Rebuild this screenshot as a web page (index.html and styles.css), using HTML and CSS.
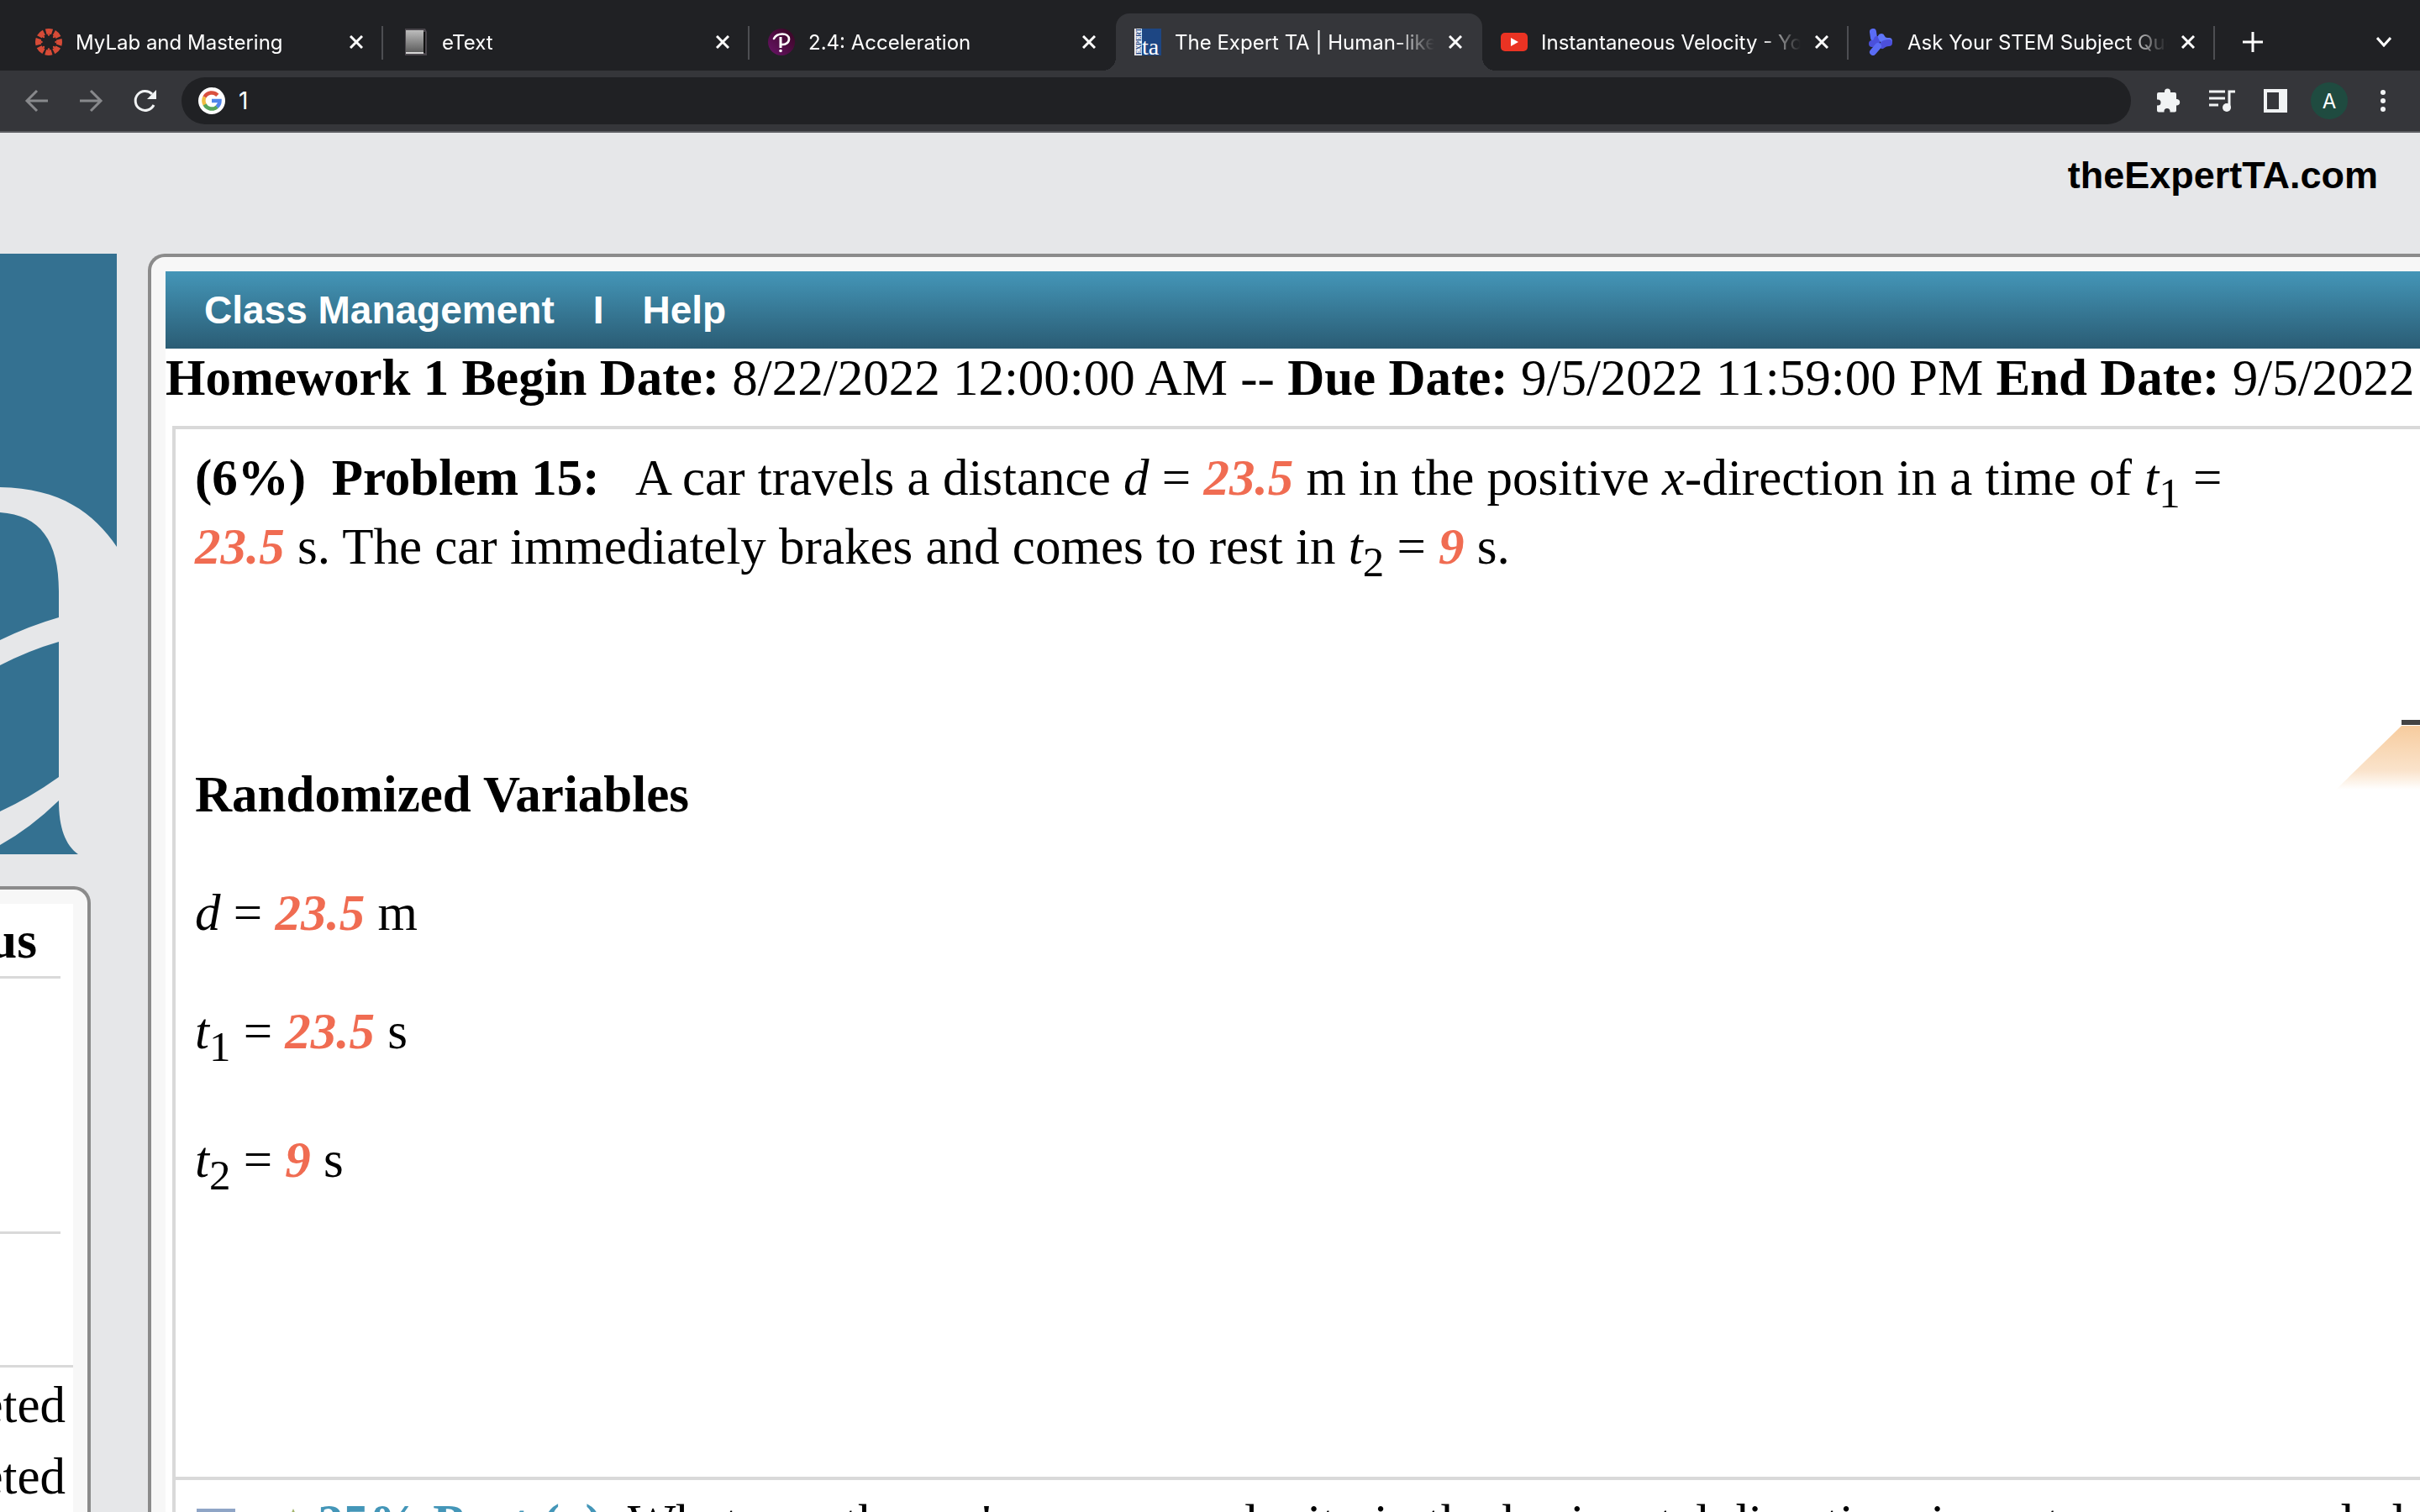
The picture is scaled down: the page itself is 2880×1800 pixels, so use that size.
FILE: index.html
```html
<!DOCTYPE html>
<html lang="en">
<head>
	<meta charset="UTF-8">
	<title>The Expert TA | Human-like Grading</title>
<link rel="stylesheet" href="styles.css">
</head>
<body>
<div class="tabs">
	<div class="tab">
		<svg class="icon" viewBox="0 0 32 32">
			<circle cx="16" cy="16" r="12.5" fill="none" stroke="#d64b37" stroke-width="7" stroke-dasharray="7.4 2.417" stroke-dashoffset="3.7"/>
			<circle cx="16" cy="16" r="8.6" fill="none" stroke="#202124" stroke-width="1.6"/>
			<g fill="#d64b37">
				<circle cx="16" cy="7.5" r="1.2"/><circle cx="22" cy="10" r="1.2"/><circle cx="24.5" cy="16" r="1.2"/><circle cx="22" cy="22" r="1.2"/>
				<circle cx="16" cy="24.5" r="1.2"/><circle cx="10" cy="22" r="1.2"/><circle cx="7.5" cy="16" r="1.2"/><circle cx="10" cy="10" r="1.2"/>
			</g>
		</svg>
		<span class="title">MyLab and Mastering</span>
		<button class="close" aria-label="Close tab"><svg viewBox="0 0 16 16"><path d="M1 1L15 15M15 1L1 15"/></svg></button>
	</div>
	<div class="tab">
		<svg class="icon" viewBox="0 0 32 32">
			<defs><linearGradient id="book" x1="0" y1="0" x2="0" y2="1"><stop offset="0" stop-color="#bdbdbd"/><stop offset="1" stop-color="#5e5e5e"/></linearGradient></defs>
			<path fill="#4a464c" d="M4 0H28L30 4V32H4z"/>
			<path fill="url(#book)" d="M5 2H26V28H5z"/>
			<path fill="#d6d6d6" d="M5 28H26V30H5z"/>
			<path fill="#111" d="M26 4H28V29H26z"/>
		</svg>
		<span class="title">eText</span>
		<button class="close" aria-label="Close tab"><svg viewBox="0 0 16 16"><path d="M1 1L15 15M15 1L1 15"/></svg></button>
	</div>
	<div class="tab">
		<svg class="icon" viewBox="0 0 32 32">
			<defs><linearGradient id="plum" x1="0" y1="1" x2="1" y2="0"><stop offset="0" stop-color="#6a1468"/><stop offset="1" stop-color="#35051f"/></linearGradient></defs>
			<circle cx="16" cy="16" r="16" fill="url(#plum)"/>
			<path d="M7 12C9 8 13 6.500 17 6.500C22 6.500 25 9 25 12.500C25 17 20.500 19.500 16 19" fill="none" stroke="#fff" stroke-width="2.600" stroke-linecap="round"/>
			<path d="M15 10V23" stroke="#fff" stroke-width="3"/>
			<circle cx="15" cy="26.500" r="1.800" fill="#fff"/>
		</svg>
		<span class="title">2.4: Acceleration</span>
		<button class="close" aria-label="Close tab"><svg viewBox="0 0 16 16"><path d="M1 1L15 15M15 1L1 15"/></svg></button>
	</div>
	<div class="tab active">
		<svg class="icon" viewBox="0 0 32 32">
			<path fill="#1d4683" d="M0 0H32V32H0z"/>
			<path fill="#e9edf4" d="M0 0H9V32H0z"/>
			<text class="ta-side" x="-31" y="8" transform="rotate(-90)">EXPERT</text>
			<text class="ta-logo" x="9" y="31">ta</text>
		</svg>
		<span class="title">The Expert TA | Human-like Grading</span>
		<button class="close" aria-label="Close tab"><svg viewBox="0 0 16 16"><path d="M1 1L15 15M15 1L1 15"/></svg></button>
	</div>
	<div class="tab">
		<svg class="icon" viewBox="0 0 32 32">
			<rect y="5" width="32" height="22" rx="5" fill="#ea3323"/>
			<path fill="#fff" d="M12 11L21 16L12 21z"/>
		</svg>
		<span class="title">Instantaneous Velocity - YouTube</span>
		<button class="close" aria-label="Close tab"><svg viewBox="0 0 16 16"><path d="M1 1L15 15M15 1L1 15"/></svg></button>
	</div>
	<div class="tab">
		<svg class="icon" viewBox="0 0 32 32">
			<g fill="none" stroke-linecap="round" stroke-width="8">
				<path stroke="#5a6cf5" d="M7 4L8 11"/>
				<path stroke="#4a50dc" d="M6 18Q11 18 12 13"/>
				<path stroke="#5f76fa" d="M17 10Q19 16 26 15"/>
				<path stroke="#4c50dc" d="M26 17Q21 17 18 20"/>
				<path stroke="#5a6cf5" d="M13 21L7 28"/>
			</g>
		</svg>
		<span class="title">Ask Your STEM Subject Questions</span>
		<button class="close" aria-label="Close tab"><svg viewBox="0 0 16 16"><path d="M1 1L15 15M15 1L1 15"/></svg></button>
	</div>
	<button class="new" aria-label="New tab"><svg viewBox="0 0 24 24"><path d="M12 0V24M0 12H24"/></svg></button>
	<button class="list" aria-label="Search tabs"><svg viewBox="0 0 18 12"><path d="M1 1L9 10L17 1"/></svg></button>
</div>

<div class="toolbar">
	<button class="tool off" aria-label="Back"><svg viewBox="0 0 32 32"><path d="M29 16H4M16 4L4 16L16 28"/></svg></button>
	<button class="tool off" aria-label="Forward"><svg viewBox="0 0 32 32"><path d="M3 16H28M16 4L28 16L16 28"/></svg></button>
	<button class="tool" aria-label="Reload"><svg viewBox="0 0 32 32"><path d="M27 21A11.500 11.500 0 1 1 25 8"/><path class="fill" d="M30 3V14H19z"/></svg></button>
	<label class="search">
		<svg class="icon" viewBox="0 0 32 32">
			<circle cx="16" cy="16" r="16" fill="#fff"/>
			<g fill="none" stroke-width="4.500">
				<path stroke="#d9503f" d="M7.500 11.500A9.500 9.500 0 0 1 22.800 9.400"/>
				<path stroke="#f2bd42" d="M7.800 20.800A9.500 9.500 0 0 1 7.500 11.500"/>
				<path stroke="#58a55c" d="M22.400 23.100A9.500 9.500 0 0 1 7.600 20.500"/>
				<path stroke="#5086ec" d="M16 16H25.500A9.500 9.500 0 0 1 22.200 23.200"/>
			</g>
		</svg>
		<input type="text" value="1" aria-label="Address and search bar">
	</label>
	<div class="tools">
		<button class="tool" aria-label="Extensions"><svg viewBox="0 0 32 32"><path class="fill" d="M12 5a3.500 3.500 0 0 1 7 0v1h5q2 0 2 2v6h1a3.800 3.800 0 0 1 0 7.500h-1v6q0 2-2 2h-5.500v-1a3.500 3.500 0 0 0-7 0v1H5q-2 0-2-2v-6h1a3.500 3.500 0 0 0 0-7H3V8q0-2 2-2h7z"/></svg></button>
		<button class="tool" aria-label="Media"><svg viewBox="0 0 32 32"><path d="M1 5H20M1 13H20M1 21H12M25 25V5H32"/><circle class="fill" cx="22" cy="24" r="5"/></svg></button>
		<button class="tool" aria-label="Side panel"><svg viewBox="0 0 32 32"><path class="fill" fill-rule="evenodd" d="M2 2H30V30H2zM6 6V26H20V6z"/></svg></button>
		<button class="avatar" aria-label="Profile">A</button>
		<button class="tool" aria-label="Menu"><svg viewBox="0 0 32 32"><g class="fill"><circle cx="16" cy="6" r="3"/><circle cx="16" cy="16" r="3"/><circle cx="16" cy="26" r="3"/></g></svg></button>
	</div>
</div>

<div class="page">
	<div class="top"><a href="#">theExpertTA.com</a></div>
	<div class="cols">
		<div class="side">
			<svg class="logo" viewBox="0 0 139 715">
				<path fill="#347191" d="M0 0H139V349C112 309 72 279 0 278z"/>
				<path fill="#347191" d="M0 308C48 311 70 342 70 402V433Q35 443 0 460z"/>
				<path fill="#347191" d="M0 490Q35 472 70 462V623Q35 648 0 664z"/>
				<path fill="#347191" d="M0 704Q36 684 70 651C70 684 78 704 93 715H0z"/>
			</svg>
			<div class="status">
				<div class="rows">
					<div class="head">Status</div>
					<div class="blank tall"></div>
					<div class="blank"></div>
					<div class="done">
						<div>Completed</div>
						<div>Completed</div>
					</div>
				</div>
			</div>
		</div>

		<div class="main">
			<div class="nav">
				<a href="#">Class Management</a>
				<span>I</span>
				<a href="#">Help</a>
			</div>
			<div class="dates"><b>Homework 1 Begin Date:</b> 8/22/2022 12:00:00 AM -- <b>Due Date:</b> 9/5/2022 11:59:00 PM <b>End Date:</b> 9/5/2022 11:59:00 PM</div>
			<div class="problem">
				<div class="question">
					<div class="text">
						<p><b>(6%)&nbsp; Problem 15:</b> &nbsp; A car travels a distance <i>d</i> = <em>23.5</em> m in the positive <i>x</i>-direction in a time of <i>t</i><sub>1</sub> = <em>23.5</em> s. The car immediately brakes and comes to rest in <i>t</i><sub>2</sub> = <em>9</em> s.</p>
						<h2>Randomized Variables</h2>
						<p><i>d</i> = <em>23.5</em> m</p>
						<p><i>t</i><sub>1</sub> = <em>23.5</em> s</p>
						<p><i>t</i><sub>2</sub> = <em>9</em> s</p>
					</div>
					<svg class="road" viewBox="0 0 100 84">
						<defs><linearGradient id="sand" x1="0" y1="0" x2="0" y2="1"><stop offset="0" stop-color="#f7cc9e"/><stop offset="0.7" stop-color="#fae3cb"/><stop offset="1" stop-color="#fff"/></linearGradient></defs>
						<path fill="url(#sand)" d="M78 8H100V84H0z"/>
						<path fill="#444" d="M78 1H100V7H78z"/>
					</svg>
				</div>
				<div class="part">
					<svg class="box" viewBox="0 0 46 46"><path fill="#8fa5c6" d="M0 0H46V46H0z"/><path fill="#b4c3da" d="M3 5H43V43H3z"/></svg>
					<svg class="mark" viewBox="0 0 46 46"><path fill="#a3b56b" d="M23 0L30 16H46L34 27L39 46L23 35L7 46L12 27L0 16H16z"/></svg>
					<b>25% Part (a)</b>
					<span>What was the car's average velocity in the horizontal direction, in meters per second, during the braking period?</span>
				</div>
			</div>
		</div>
	</div>
</div>
</body>
</html>
```
FILE: styles.css
```css
*{ margin:0; padding:0; box-sizing:border-box;}
body{ height:100vh; overflow:hidden; display:flex; flex-direction:column; background:#e6e7e9; font-family:"Liberation Serif",serif; font-size:61px; color:#000;}
button{ border:0; background:none; display:flex; align-items:center; justify-content:center; flex:none;}
a{ color:inherit; text-decoration:none;}
svg{ display:block; flex:none;}
.icon{ width:32px; height:32px;}

/* browser tabs */
.tabs{ height:84px; flex:none; display:flex; align-items:flex-end; padding:0 24px 0 20px; background:#202124; font-family:Inter,sans-serif; font-size:24px; color:#fff;}
.tab{ position:relative; flex:0 1 436px; min-width:0; height:68px; display:flex; align-items:center; gap:16px; padding:0 23px 0 22px;}
.tab::after{ content:""; position:absolute; right:0; top:15px; width:2px; height:40px; background:#4d4e52;}
.tab:has(+ .active)::after{ display:none;}
.tab.active{ background:#35363a; border-radius:16px 16px 0 0;}
.tab.active::before,.tab.active::after{ content:""; position:absolute; top:auto; bottom:0; width:16px; height:16px;}
.tab.active::before{ left:-16px; background:radial-gradient(circle at 0 0,transparent 16px,#35363a 16px);}
.tab.active::after{ right:-16px; background:radial-gradient(circle at 100% 0,transparent 16px,#35363a 16px);}
.title{ flex:1; overflow:hidden; white-space:nowrap; -webkit-mask-image:linear-gradient(to left,transparent,#000 48px); mask-image:linear-gradient(to left,transparent,#000 48px);}
.close{ width:18px; height:68px;}
.tabs button path{ fill:none; stroke:#fff; stroke-width:3;}
.close svg{ width:16px; height:16px;}
.new{ width:90px; height:68px;}
.new svg{ width:24px; height:24px;}
.list{ height:68px; margin-left:auto; padding:0 10px;}
.list svg{ width:18px; height:12px;}
.ta-side{ font:bold 8px "Liberation Serif",serif; fill:#1d4683;}
.ta-logo{ font:28px "Liberation Serif",serif; fill:#fff;}

/* toolbar */
.toolbar{ height:74px; flex:none; display:flex; align-items:center; gap:32px; padding:0 28px; background:#35363a; border-bottom:2px solid #5c5d61;}
.tool svg{ width:32px; height:32px;}
.tool path{ fill:none; stroke:#f1f3f4; stroke-width:3;}
.tool .fill{ fill:#f1f3f4; stroke:none;}
.off path{ stroke:#88898c;}
.search{ flex:1; height:56px; margin:0 -4px; display:flex; align-items:center; gap:16px; padding:0 20px; border-radius:28px; background:#202124;}
.search input{ flex:1; border:0; outline:0; background:none; color:#fff; font:28px Inter,sans-serif;}
.tools{ display:flex; align-items:center; gap:32px;}
.tools .tool:last-child{ margin-left:-6px;}
.avatar{ width:44px; height:44px; margin-left:-6px; border-radius:50%; background:#1f4b40; color:#fff; font:24px Inter,sans-serif;}

/* page */
.page{ flex:1; min-height:0; display:flex; flex-direction:column;}
.top{ height:144px; flex:none; padding:25px 50px 0 0; text-align:right; font:bold 45px "Liberation Sans",sans-serif;}
.cols{ flex:1; min-height:0; display:flex;}
.side{ width:176px; flex:none; display:flex; flex-direction:column;}
.logo{ width:139px; height:715px;}
.status{ flex:1; min-height:0; width:108px; margin-top:38px; overflow:hidden; display:flex; justify-content:flex-end; border:4px solid #8b8b8b; border-width:4px 4px 0 0; border-top-right-radius:20px; background:#f7f7f7; padding:17px 17px 0 0;}
.rows{ flex:none; width:300px; background:#fff; text-align:right;}
.head{ height:89px; margin-right:15px; padding:9px 28px 0 0; border-bottom:3px solid #d9d9d9; font-weight:bold;}
.blank{ height:159px;}
.tall{ height:304px; margin-right:15px; border-bottom:3px solid #d9d9d9;}
.blank + .blank{ border-bottom:3px solid #d9d9d9;}
.done{ padding:2px 9px 0 0; line-height:85px;}

.main{ flex:1; min-width:0; overflow:hidden; border:4px solid #8b8b8b; border-width:4px 0 0 4px; border-top-left-radius:20px; background:linear-gradient(to right,#f7f7f7 17px,#fff 17px);}
.nav{ display:flex; align-items:center; gap:46px; height:109px; margin-left:17px; padding:0 46px; border-top:17px solid #f7f7f7; background:linear-gradient(#4496b8,#2a5c74) padding-box; color:#fff; font:bold 46px "Liberation Sans",sans-serif;}
.dates{ margin-left:17px; white-space:nowrap;}
.problem{ margin:22px 0 0 25px; border:4px solid #d9d9d9; border-width:4px 0 0 4px;}
.question{ display:flex; gap:20px; padding:23px 0 330px 23px; border-bottom:4px solid #d9d9d9;}
.text{ flex:1;}
.text h2{ margin-top:213px; font-size:61px;}
.text h2 ~ p{ margin-top:71px;}
.text em{ font-weight:bold; color:#f06c52;}
sub{ font-size:51px; vertical-align:-15px;}
.road{ width:100px; height:84px; margin-top:322px;}
.part{ display:flex; align-items:center; padding:16px 0 0 25px; white-space:nowrap;}
.part b{ margin:0 30px; color:#4496b8;}
.box,.mark{ width:46px; height:46px; margin-top:12px;}
.mark{ margin-left:46px; margin-right:-24px;}
```
